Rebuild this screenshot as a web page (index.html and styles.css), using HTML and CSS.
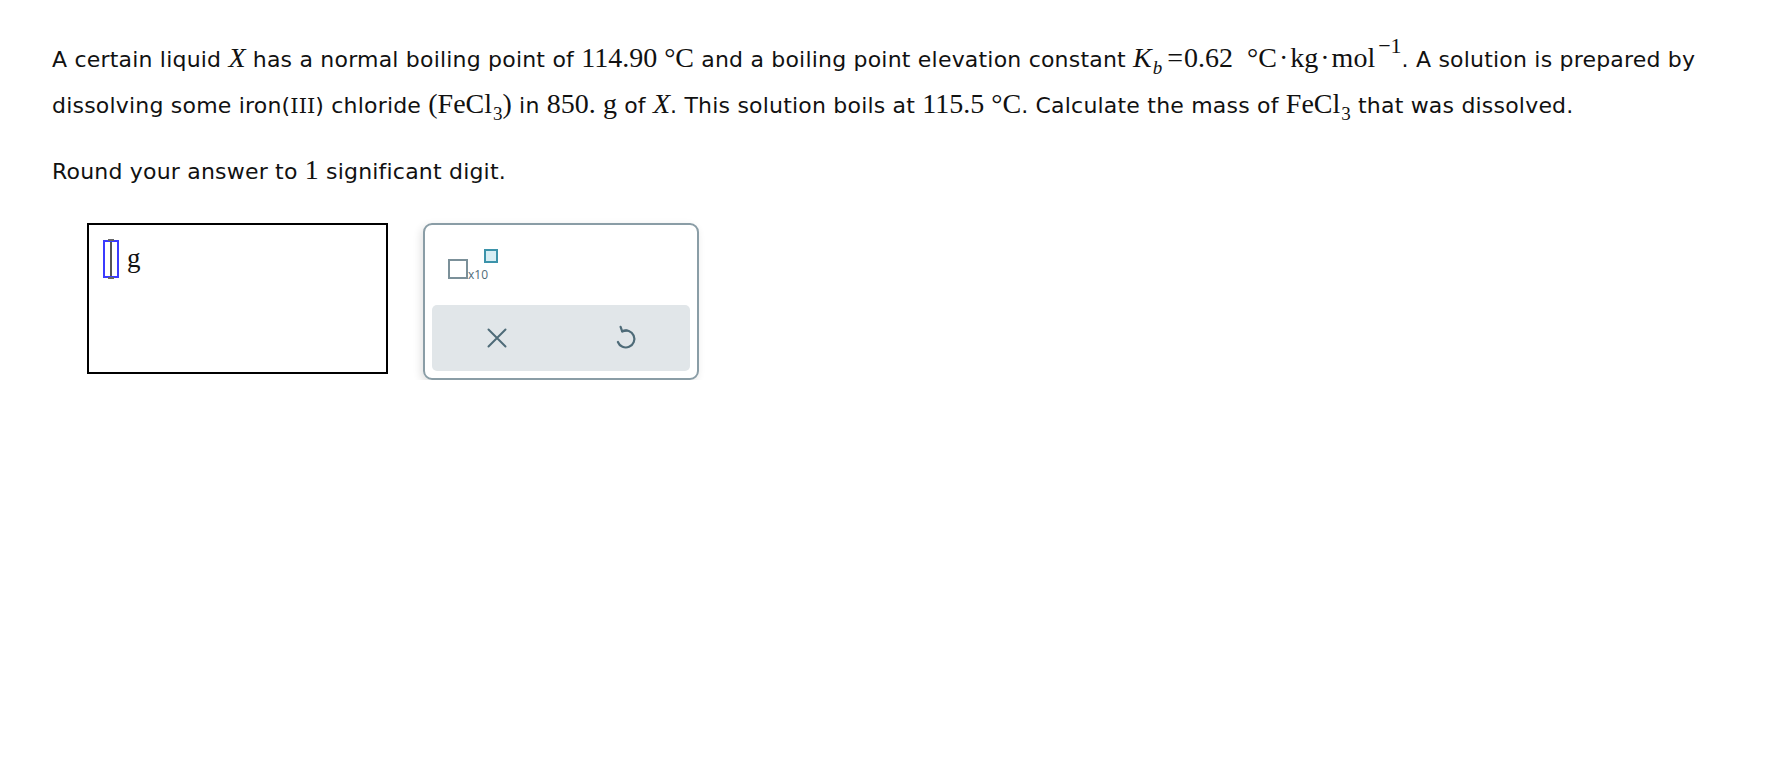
FILE: index.html
```html
<!DOCTYPE html>
<html>
<head>
<meta charset="utf-8">
<link rel="stylesheet" href="styles.css">
</head>
<body>
<div class="page">
  <p class="para">A certain liquid <span class="m i">X</span> has a normal boiling point of <span class="m">114.90 °C</span> and a boiling point elevation constant <span class="m"><span class="i">K</span><sub class="i">b</sub><span class="eq">=</span>0.62 &nbsp;°C<span class="dot">·</span>kg<span class="dot">·</span>mol<sup>−1</sup></span>. A solution is prepared by dissolving some iron(<span class="roman">III</span>) chloride <span class="m">(FeCl<sub>3</sub>)</span> in <span class="m">850.</span> <span class="m">g</span> of <span class="m i">X</span>. This solution boils at <span class="m">115.5 °C</span>. Calculate the mass of <span class="m">FeCl<sub>3</sub></span> that was dissolved.</p>
  <p class="round">Round your answer to <span class="m">1</span> significant digit.</p>
  <div class="answer-row">
    <div class="answer-box">
      <span class="cursor"><span class="beam"></span></span>
      <span class="unit">g</span>
    </div>
    <div class="keypad">
      <div class="keys">
        <div class="sci">
          <span class="sq-base"></span><span class="x10">x10</span><span class="sq-exp"></span>
        </div>
      </div>
      <div class="actions">
        <button class="act" aria-label="clear">
          <svg width="20" height="20" viewBox="0 0 20 20"><path d="M1.5 1.5 L18.5 18.5 M18.5 1.5 L1.5 18.5" stroke="#4e6b78" stroke-width="2" fill="none" stroke-linecap="round"/></svg>
        </button>
        <button class="act" aria-label="undo">
          <svg width="24" height="26" viewBox="0 0 24 26"><path d="M8.2 6.3 A8.5 8.5 0 1 1 3.9 17" stroke="#4e6b78" stroke-width="2.2" fill="none" stroke-linecap="round"/><path d="M6.6 1.8 L8.2 6.3 L12.8 5.5" stroke="#4e6b78" stroke-width="2.2" fill="none" stroke-linecap="round" stroke-linejoin="round"/></svg>
        </button>
      </div>
    </div>
  </div>
</div>
</body>
</html>
```
FILE: styles.css
```css
html, body {
  margin: 0;
  padding: 0;
  background: #fff;
}
.page {
  padding: 37px 0 0 52px;
  width: 1720px;
  font-family: "DejaVu Sans", Verdana, sans-serif;
  font-size: 22px;
  letter-spacing: 0.2px;
  color: #111;
}
.para {
  margin: 0;
  line-height: 46px;
}
.m {
  font-family: "Liberation Serif", "Times New Roman", serif;
  font-size: 28px;
  line-height: 1;
  letter-spacing: 0;
}
.roman {
  font-family: "DejaVu Serif", serif;
  font-size: 21px;
  letter-spacing: 0;
}
.i {
  font-style: italic;
}
.eq {
  margin: 0 1px 0 5px;
}
.dot {
  margin: 0 2px;
}
sub {
  font-size: 19px;
  vertical-align: -7px;
  line-height: 0;
  margin-left: 1px;
}
sup {
  font-size: 22px;
  vertical-align: 14px;
  line-height: 0;
  margin-left: 3px;
}
.round {
  margin: 27px 0 0 0;
  line-height: 30px;
}
.answer-row {
  display: flex;
  align-items: flex-start;
  gap: 35px;
  margin: 36px 0 0 35px;
}
.answer-box {
  box-sizing: border-box;
  width: 301px;
  height: 151px;
  border: 2px solid #000;
  display: flex;
  align-items: flex-start;
  padding: 15px 0 0 14px;
  gap: 8px;
}
.cursor {
  box-sizing: border-box;
  width: 16px;
  height: 38px;
  border: 2px solid #3b3bff;
  display: flex;
  justify-content: center;
  position: relative;
}
.cursor::before, .cursor::after {
  content: "";
  position: absolute;
  left: 3px;
  width: 6px;
  height: 2px;
  background: #666;
}
.cursor::before { top: -3px; }
.cursor::after { bottom: -3px; }
.beam {
  width: 2px;
  background: #555;
  height: 100%;
}
.unit {
  font-family: "Liberation Serif", "Times New Roman", serif;
  font-size: 27px;
  line-height: 30px;
  margin-top: 3px;
  letter-spacing: 0;
}
.keypad {
  box-sizing: border-box;
  width: 276px;
  height: 157px;
  border: 2px solid #8a9da6;
  border-radius: 9px;
  box-shadow: -2px 3px 8px rgba(0,0,0,0.12);
  padding: 0 7px 7px 7px;
  display: flex;
  flex-direction: column;
}
.keys {
  height: 80px;
}
.sci {
  position: relative;
  width: 60px;
  height: 40px;
  margin: 24px 0 0 16px;
}
.sq-base {
  position: absolute;
  left: 0;
  top: 10px;
  width: 16px;
  height: 16px;
  border: 2px solid #7b9099;
}
.x10 {
  position: absolute;
  left: 20px;
  top: 17px;
  font-family: "Open Sans", "DejaVu Sans", sans-serif;
  font-size: 12px;
  letter-spacing: 0;
  color: #4e6b78;
}
.sq-exp {
  position: absolute;
  left: 36px;
  top: 0;
  width: 10px;
  height: 10px;
  border: 2px solid #3c93aa;
  background: #d7eef4;
}
.actions {
  flex: 1;
  background: #e1e6e9;
  border-radius: 5px;
  display: flex;
}
.act {
  flex: 1;
  border: none;
  background: transparent;
  display: flex;
  align-items: center;
  justify-content: center;
  padding: 0;
}
```
